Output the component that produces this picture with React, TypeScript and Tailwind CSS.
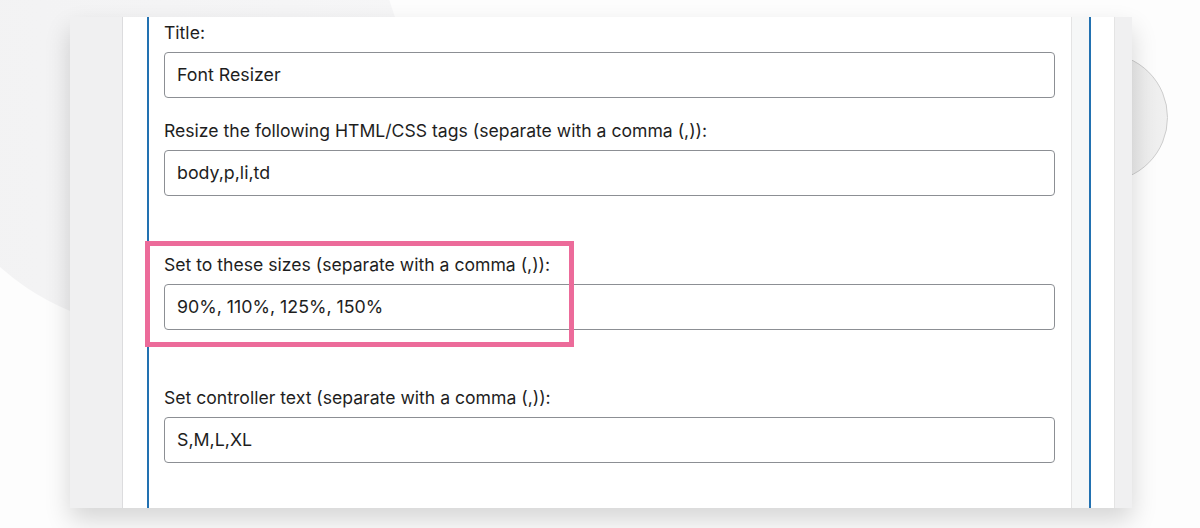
import React from "react";

const fields = [
  { label: "Title:", value: "Font Resizer", gap: "mt-0" },
  { label: "Resize the following HTML/CSS tags (separate with a comma (,)):", value: "body,p,li,td", gap: "mt-[21px]" },
  { label: "Set to these sizes (separate with a comma (,)):", value: "90%, 110%, 125%, 150%", gap: "mt-[57px]" },
  { label: "Set controller text (separate with a comma (,)):", value: "S,M,L,XL", gap: "mt-[56px]" },
];

function Field({ label, value, gap }: { label: string; value: string; gap: string }) {
  return (
    <div className={gap}>
      <div className="h-6 leading-6 text-[17.6px] text-[#1e1e1e]">{label}</div>
      <div className="mt-[7px] flex h-[46px] items-center rounded-[4px] border border-[#8c8f94] bg-white px-[12px] text-[17.8px] text-[#1e1e1e]">
        {value}
      </div>
    </div>
  );
}

export default function App() {
  return (
    <div
      className="relative h-[528px] w-[1200px] overflow-hidden bg-[#fdfdfd]"
      style={{ fontFamily: "Inter, 'Noto Sans', sans-serif" }}
    >
      {/* decorative background shapes */}
      <div className="absolute left-[-81px] top-[-157px] h-[486px] w-[486px] rounded-full bg-gradient-to-r from-[#f2f2f3] to-[#f6f6f7]" />
      <div className="absolute left-[1039px] top-[53px] h-[129px] w-[129px] rounded-full border border-[#cdcdcd] bg-gradient-to-r from-[#e2e2e2] to-[#f0f0f0]" />

      {/* window */}
      <div className="relative ml-[70px] mt-[17px] flex h-[491px] w-[1062px] bg-[#f0f0f1] shadow-[0_12px_24px_rgba(0,0,0,0.16)]">
        <div className="w-[53px] border-r border-[#dcdcde]" />
        <div className="w-[24px] bg-white" />
        <div className="w-[2px] bg-[#2271b1]" />
        <div className="flex w-[922px] flex-col bg-white pl-[15px] pr-[16px] pt-[4px]">
          {fields.map((f) => (
            <Field key={f.label} {...f} />
          ))}
        </div>
        <div className="w-[18px] border-l border-[#e4e4e4] bg-[#f6f7f7]" />
        <div className="w-[2px] bg-[#2271b1]" />
        <div className="w-[23px] bg-white" />
        <div className="flex-1 border-l border-[#e4e4e4] bg-[#f0f0f1]" />

        {/* highlight annotation */}
        <div className="absolute left-[75px] top-[224px] h-[106px] w-[429px] border-[5px] border-[#ec6b9a]" />
      </div>
    </div>
  );
}
